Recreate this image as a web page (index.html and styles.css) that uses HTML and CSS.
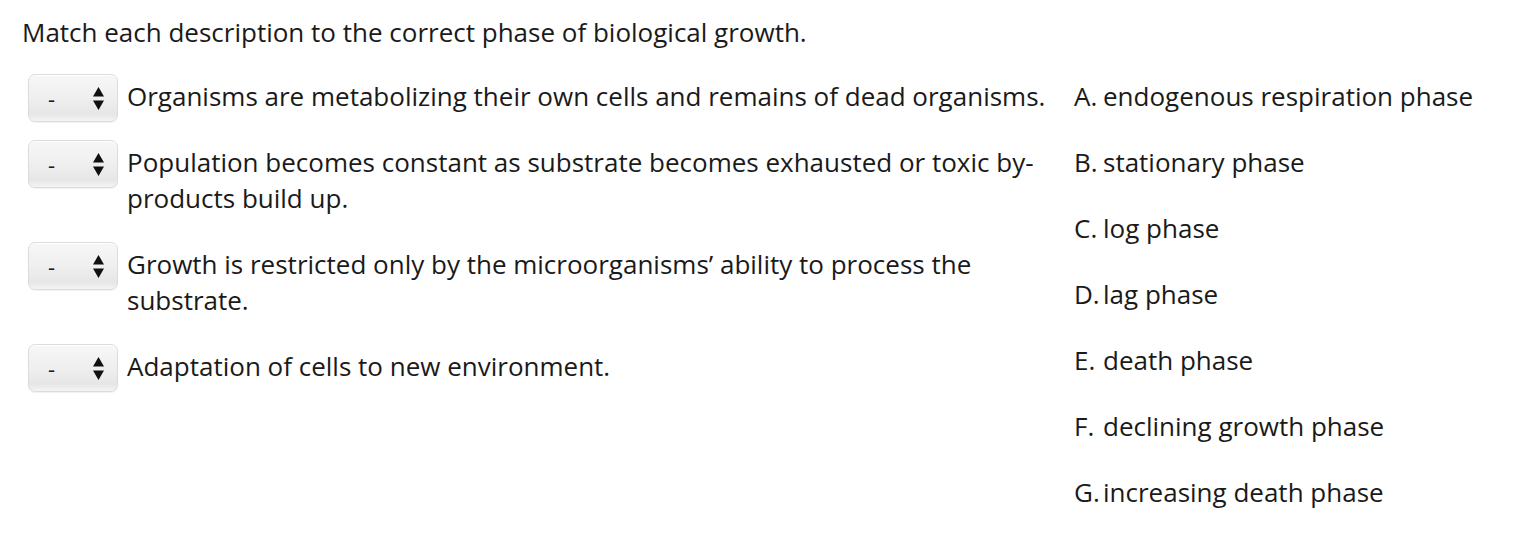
FILE: index.html
```html
<!DOCTYPE html>
<html lang="en">
<head>
    <meta charset="UTF-8">
    <meta name="viewport" content="width=device-width, initial-scale=1.0">
    <title>Match the phases</title>
    <link rel="stylesheet" href="styles.css">
</head>
<body>
    <div class="question">
        <p class="prompt">Match each description to the correct phase of biological growth.</p>
        <div class="match">
            <div class="descriptions">
                <div class="desc-row">
                    <div class="picker">
                        <span class="picker-value">-</span>
                        <svg class="picker-arrows" width="11" height="23" viewBox="0 0 11 23"><path d="M5.5 0 L11 9.5 H0 Z M0 13.5 H11 L5.5 23 Z" fill="#111"/></svg>
                    </div>
                    <div class="desc-text">Organisms are metabolizing their own cells and remains of dead organisms.</div>
                </div>
                <div class="desc-row">
                    <div class="picker">
                        <span class="picker-value">-</span>
                        <svg class="picker-arrows" width="11" height="23" viewBox="0 0 11 23"><path d="M5.5 0 L11 9.5 H0 Z M0 13.5 H11 L5.5 23 Z" fill="#111"/></svg>
                    </div>
                    <div class="desc-text">Population becomes constant as substrate becomes exhausted or toxic by-products build up.</div>
                </div>
                <div class="desc-row">
                    <div class="picker">
                        <span class="picker-value">-</span>
                        <svg class="picker-arrows" width="11" height="23" viewBox="0 0 11 23"><path d="M5.5 0 L11 9.5 H0 Z M0 13.5 H11 L5.5 23 Z" fill="#111"/></svg>
                    </div>
                    <div class="desc-text">Growth is restricted only by the microorganisms’ ability to process the substrate.</div>
                </div>
                <div class="desc-row">
                    <div class="picker">
                        <span class="picker-value">-</span>
                        <svg class="picker-arrows" width="11" height="23" viewBox="0 0 11 23"><path d="M5.5 0 L11 9.5 H0 Z M0 13.5 H11 L5.5 23 Z" fill="#111"/></svg>
                    </div>
                    <div class="desc-text">Adaptation of cells to new environment.</div>
                </div>
            </div>
            <ul class="answers">
                <li><span class="letter">A.</span>endogenous respiration phase</li>
                <li><span class="letter">B.</span>stationary phase</li>
                <li><span class="letter">C.</span>log phase</li>
                <li><span class="letter">D.</span>lag phase</li>
                <li><span class="letter">E.</span>death phase</li>
                <li><span class="letter">F.</span>declining growth phase</li>
                <li><span class="letter">G.</span>increasing death phase</li>
            </ul>
        </div>
    </div>
</body>
</html>
```

FILE: styles.css
```css
body {
    font-family: "Open Sans", sans-serif;
    font-size: 26px;
    line-height: 36px;
    color: #1a1a1a;
    background-color: #fff;
    margin: 0;
    padding: 0;
}

.question {
    padding: 14px 22px;
}

.prompt {
    margin: 0 0 28px 0;
}

.match {
    display: flex;
    align-items: flex-start;
}

.descriptions {
    display: flex;
    flex-direction: column;
    gap: 30px;
    width: 1046px;
    padding-left: 6px;
}

.desc-row {
    display: flex;
    align-items: flex-start;
    gap: 9px;
}

.picker {
    flex: none;
    box-sizing: border-box;
    width: 90px;
    height: 48px;
    margin: -4px 0 -8px 0;
    display: flex;
    align-items: center;
    justify-content: space-between;
    padding: 0 13px 0 19px;
    border: 1px solid #dcdcdc;
    border-radius: 7px;
    background: linear-gradient(#f7f7f7, #eeeeee 55%, #e6e6e6 85%, #f4f4f4);
    box-shadow: inset 0 1px 0 #fff, 0 1px 1px rgba(0, 0, 0, 0.06);
}

.picker-value {
    font-size: 22px;
}

.desc-text {
    width: 930px;
}

.answers {
    list-style: none;
    margin: 0;
    padding: 0;
    display: flex;
    flex-direction: column;
    gap: 30px;
}

.answers li {
    display: flex;
}

.letter {
    width: 29px;
    flex: none;
}
```
